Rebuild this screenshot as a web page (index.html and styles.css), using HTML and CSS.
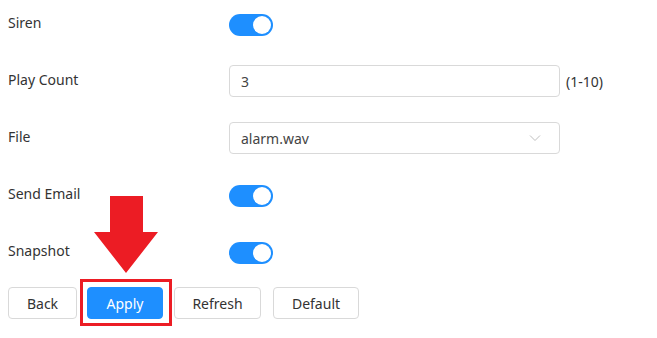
FILE: index.html
```html
<!DOCTYPE html>
<html>
<head>
<meta charset="utf-8">
<link rel="stylesheet" href="styles.css">
</head>
<body>
<div class="page">
  <div class="form">
    <div class="row">
      <div class="label">Siren</div>
      <div class="control"><span class="toggle"><span class="knob"></span></span></div>
    </div>
    <div class="row">
      <div class="label">Play Count</div>
      <div class="control"><div class="input">3</div><span class="hint">(1-10)</span></div>
    </div>
    <div class="row">
      <div class="label">File</div>
      <div class="control"><div class="input select">alarm.wav<svg class="chev" width="12" height="8" viewBox="0 0 12 8"><path d="M1 1.5 L6 6.5 L11 1.5" fill="none" stroke="#bfbfbf" stroke-width="1"/></svg></div></div>
    </div>
    <div class="row">
      <div class="label">Send Email</div>
      <div class="control"><span class="toggle"><span class="knob"></span></span></div>
    </div>
    <div class="row">
      <div class="label">Snapshot</div>
      <div class="control"><span class="toggle"><span class="knob"></span></span></div>
    </div>
  </div>
  <div class="buttons">
    <button class="btn back">Back</button>
    <span class="highlight"><button class="btn primary">Apply</button><span class="redbox"></span></span>
    <button class="btn refresh">Refresh</button>
    <button class="btn default">Default</button>
  </div>
  <svg class="arrow" width="66" height="80" viewBox="0 0 66 80"><polygon points="16,0 49,0 49,36 64,36 32,77 0,36 16,36" fill="#ec1c24"/></svg>
</div>
</body>
</html>
```
FILE: styles.css
```css
* { box-sizing: border-box; }
html, body { margin: 0; padding: 0; background: #fff; }
body {
  font-family: "Noto Sans", "Open Sans", sans-serif;
  font-size: 14px;
  color: #333;
}
.page { position: relative; width: 657px; height: 338px; padding: 8px 0 0 8px; }
.form { display: flex; flex-direction: column; gap: 25px; }
.row { display: grid; grid-template-columns: 221px auto; align-items: center; height: 32px; }
.label { color: #333; margin-top: -3px; }
.control { display: flex; align-items: center; }
.toggle {
  position: relative; display: inline-block; width: 44px; height: 22px;
  border-radius: 11px; background: #1e8fff; margin-top: 1px;
}
.knob {
  position: absolute; top: 2px; right: 2px; width: 18px; height: 18px;
  border-radius: 50%; background: #fff;
}
.input {
  width: 331px; height: 32px; border: 1px solid #d9d9d9; border-radius: 4px;
  padding: 0 11px; display: flex; align-items: center; color: #444; background: #fff;
}
.select { justify-content: space-between; }
.chev { margin-right: 7px; }
.hint { margin-left: 6px; color: #333; }
.buttons { display: flex; align-items: center; margin-top: 19px; }
.btn {
  height: 32px; padding: 0; border: 1px solid #d9d9d9; border-radius: 4px;
  background: #fff; color: #333; font-family: inherit; font-size: 14px; text-align: center;
}
.back { width: 69px; }
.highlight { position: relative; display: inline-flex; margin-left: 10px; }
.primary { width: 76px; background: #1e8fff; border-color: #1e8fff; color: #fff; }
.refresh { width: 87px; margin-left: 11px; }
.default { width: 86px; margin-left: 12px; }
.redbox {
  position: absolute; top: -8px; left: -7px; right: -9px; bottom: -7px;
  border: 3px solid #ec1c24;
}
.arrow { position: absolute; left: 94px; top: 196px; }
```
